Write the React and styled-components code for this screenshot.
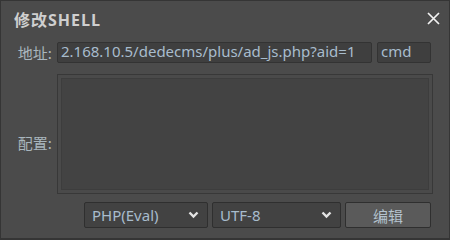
import styled, { createGlobalStyle } from "styled-components";

const GlobalStyle = createGlobalStyle`
  html, body {
    margin: 0;
    padding: 0;
    background: #4a4a4a;
  }
  * { box-sizing: border-box; }
`;

const Window = styled.div`
  width: 450px;
  height: 240px;
  background: #4b4b4b;
  border: 1px solid #353535;
  border-bottom-width: 2px;
  display: flex;
  flex-direction: column;
  font-family: "Noto Sans", "Noto Sans CJK SC", sans-serif;
`;

const TitleBar = styled.div`
  height: 34px;
  display: flex;
  align-items: center;
  justify-content: space-between;
  padding: 1px 8px 0 13px;
`;

const Title = styled.div`
  color: #cfcfcf;
  font-family: "Open Sans", "Noto Sans CJK SC", sans-serif;
  font-size: 16px;
  font-weight: bold;
  letter-spacing: 1px;
`;

const CloseBtn = styled.button`
  background: none;
  border: none;
  padding: 0;
  width: 16px;
  height: 16px;
  display: flex;
  align-items: center;
  justify-content: center;
  cursor: pointer;
`;

const Body = styled.div`
  display: grid;
  grid-template-columns: 56px 1fr;
  padding: 7px 16px 0 0;
`;

const Label = styled.div`
  color: #a9b6be;
  font-size: 15px;
  padding-right: 5px;
  padding-top: ${p => p.$offset || "0px"};
  margin-top: ${p => p.$top || "0px"};
  display: flex;
  align-items: center;
  justify-content: flex-end;
  font-family: "Noto Sans CJK SC", sans-serif;
`;

const AddrRow = styled.div`
  display: flex;
  gap: 5px;
  padding-right: 2px;
`;

const Field = styled.div`
  flex: ${p => p.$grow ? 1 : "none"};
  width: ${p => p.$width || "auto"};
  height: 21px;
  background: #3f3f3f;
  border: 1px solid #333;
  border-radius: 2px;
  color: #a8bccd;
  font-size: 15px;
  line-height: 17px;
  padding: 0 3px;
  overflow: hidden;
  white-space: nowrap;
`;

const ConfigArea = styled.div`
  margin-top: 11px;
  height: 120px;
  background: #434343;
  border: 1px solid #383838;
  box-shadow: inset 0 0 0 3px #4a4a4a, inset 0 0 0 4px #3d3d3d;
`;

const Controls = styled.div`
  grid-column: 2;
  display: flex;
  gap: 4px;
  margin-top: 8px;
  padding-left: 27px;
`;

const Select = styled.div`
  width: ${p => p.$width};
  height: 26px;
  background: #424242;
  border: 1px solid #2f2f2f;
  border-radius: 2px;
  display: flex;
  align-items: center;
  justify-content: space-between;
  padding: 0 8px 0 7px;
  color: #a8bccd;
  font-size: 15px;
`;

const Button = styled.button`
  width: 86px;
  height: 26px;
  background: #5a5a5a;
  border: 1px solid #2f2f2f;
  border-radius: 2px;
  color: #b4c3cf;
  font-size: 15px;
  font-family: "Noto Sans CJK SC", sans-serif;
  padding: 0;
  cursor: pointer;
`;

const Chevron = () => (
  <svg width="11" height="8" viewBox="0 0 11 8">
    <polyline points="1.5,1.5 5.5,5.5 9.5,1.5" fill="none" stroke="#e4e4e4" strokeWidth="2.4" />
  </svg>
);

export default function App() {
  return (
    <>
      <GlobalStyle />
      <Window>
        <TitleBar>
          <Title>修改SHELL</Title>
          <CloseBtn>
            <svg width="13" height="13" viewBox="0 0 13 13">
              <path d="M1 1 L12 12 M12 1 L1 12" stroke="#f2f2f2" strokeWidth="1.7" />
            </svg>
          </CloseBtn>
        </TitleBar>
        <Body>
          <Label>地址:</Label>
          <AddrRow>
            <Field $grow>2.168.10.5/dedecms/plus/ad_js.php?aid=1</Field>
            <Field $width="54px">cmd</Field>
          </AddrRow>
          <Label $top="11px" $offset="16px">配置:</Label>
          <ConfigArea />
          <Controls>
            <Select $width="124px">PHP(Eval)<Chevron /></Select>
            <Select $width="129px">UTF-8<Chevron /></Select>
            <Button>编辑</Button>
          </Controls>
        </Body>
      </Window>
    </>
  );
}
